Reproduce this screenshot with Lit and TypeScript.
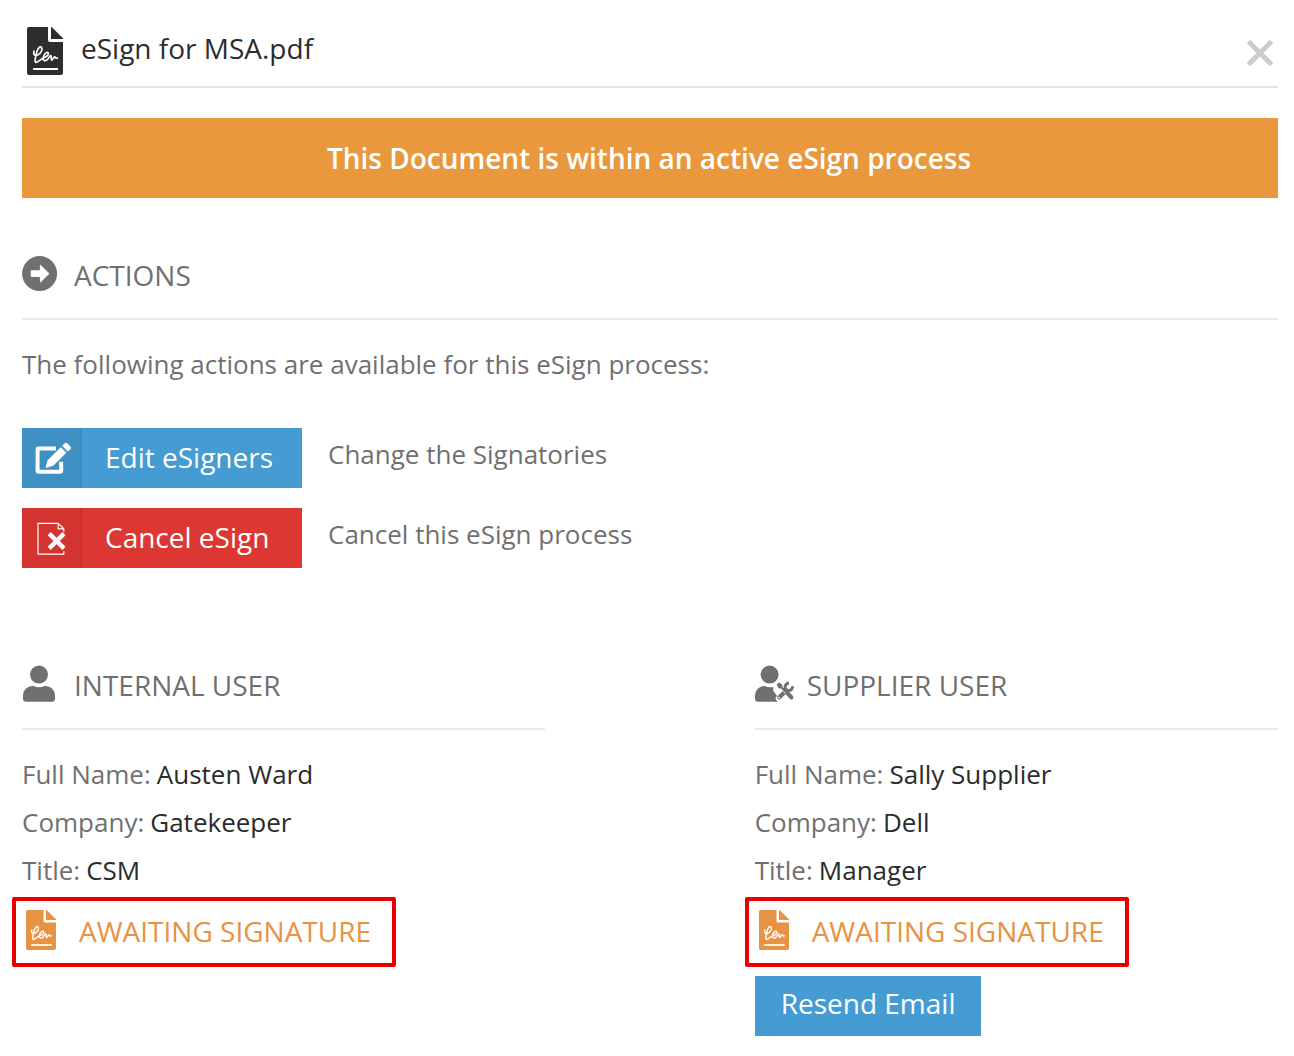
import { LitElement, html, css, svg } from "lit";
import { customElement, property } from "lit/decorators.js";

interface Signatory {
  heading: string;
  icon: "user" | "supplier";
  name: string;
  company: string;
  title: string;
  canResend: boolean;
}

const signatories: Signatory[] = [
  { heading: "INTERNAL USER", icon: "user", name: "Austen Ward", company: "Gatekeeper", title: "CSM", canResend: false },
  { heading: "SUPPLIER USER", icon: "supplier", name: "Sally Supplier", company: "Dell", title: "Manager", canResend: true },
];

const glyphs = {
  signature: {
    box: "0 0 36 48",
    art: svg`
      <path fill="currentColor" d="M2 0H21V13a2 2 0 0 0 2 2H36V46a2 2 0 0 1-2 2H2a2 2 0 0 1-2-2V2A2 2 0 0 1 2 0Z"/>
      <path fill="currentColor" d="M24 0H24.6L36 11.2V12H24Z"/>
      <path fill="none" stroke="#fff" stroke-width="1.7" stroke-linecap="round" stroke-linejoin="round"
        d="M7 24C6 27.6 8 29.4 11 27.8C14.6 25.8 16 21.6 14.2 20C12 18.8 9.8 23.4 9 28C8.2 32 7.4 35.6 9.2 35.4C11.6 35.2 13.6 31.6 16.8 30.8C20.4 29.8 22.2 26.8 21 25.6C19.4 24.6 16.4 28 16 31C15.6 33.8 18 34.4 20 32.8C21.8 31.4 22.6 28.4 23.8 28.6C25 29 23.4 32.8 24.6 33.2C26 33.2 26.4 29.6 27.8 29.8C28.6 30 28 32 30.4 31"/>
      <path fill="#fff" d="M6 41H31V43H6Z"/>`,
  },
  arrow: {
    box: "0 0 36 36",
    art: svg`
      <circle cx="17.6" cy="17.6" r="17.5" fill="currentColor"/>
      <path fill="#fff" stroke="#fff" stroke-width="1" stroke-linejoin="round" d="M9.2 14.8H18.4V9.2L27 17.6L18.4 26V20.4H9.2Z"/>`,
  },
  user: {
    box: "0 0 36 36",
    art: svg`
      <circle cx="17" cy="8.6" r="9" fill="currentColor"/>
      <path fill="currentColor" d="M10.4 20H11.6A13 13 0 0 0 22.4 20H23.6A9.4 9.4 0 0 1 33 29.4V32.6A3.2 3.2 0 0 1 29.8 35.8H4.2A3.2 3.2 0 0 1 1 32.6V29.4A9.4 9.4 0 0 1 10.4 20Z"/>`,
  },
  supplier: {
    box: "0 0 40 36",
    art: svg`
      <circle cx="14.6" cy="8.6" r="9" fill="currentColor"/>
      <path fill="currentColor" d="M9 20H9.8A13 13 0 0 0 18.4 21C17.8 23.4 18.2 25.2 19.8 26.8L22 29.8L20.4 32C20.8 33.6 21.4 34.6 23 35.8H3A3 3 0 0 1 0 32.8V29.4A9.4 9.4 0 0 1 9 20Z"/>
      <path fill="none" stroke="currentColor" stroke-width="4.2" stroke-linecap="round" d="M24.2 31.4L31.2 24.8"/>
      <path fill="none" stroke="currentColor" stroke-width="3" d="M37.4 20.2A3.7 3.7 0 1 1 34 17.2"/>
      <path fill="none" stroke="currentColor" stroke-width="2" d="M23 18L30 25"/>
      <path fill="currentColor" d="M21.6 18.6L24 16.4L27.4 18.8V21L25.6 22.6L23.6 22.2Z"/>
      <path fill="none" stroke="#fff" stroke-width="1" d="M28.4 25.4L34 31.4"/>
      <path fill="none" stroke="currentColor" stroke-width="4.2" stroke-linecap="round" d="M32 26.6L36.4 31.4"/>
      <circle cx="24" cy="31.6" r=".9" fill="#fff"/>`,
  },
  edit: {
    box: "0 0 36 32",
    art: svg`
      <path fill="none" stroke="currentColor" stroke-width="4" stroke-linejoin="round" d="M21 5.4H3.6A1 1 0 0 0 2.6 6.4V27.8A1 1 0 0 0 3.6 28.8H25.2A1 1 0 0 0 26.2 27.8V18.8"/>
      <path fill="currentColor" d="M25.8 4.2L31.4 9.8L18.6 22.4L12 24.8Q10.6 25 10.8 23.6L12.6 17.2Z"/>
      <path fill="currentColor" d="M27.2 2.8L29.6 .4Q31 -.8 32.4 .4L35.4 3.4Q36.6 4.8 35.4 6.2L32.8 8.6Z"/>`,
  },
  cancel: {
    box: "0 0 36 32",
    art: svg`
      <path fill="none" stroke="currentColor" stroke-width="1.2" d="M28.8 28.2V31.2H3V.4H23.2L28.8 5.8V8.8"/>
      <path fill="none" stroke="currentColor" stroke-width="1.2" d="M23.2 .4V5.8H28.8"/>
      <path fill="none" stroke="currentColor" stroke-width="4.4" d="M14.2 10.6L29 25.4M29 10.6L14.2 25.4"/>`,
  },
  close: {
    box: "0 0 28 28",
    art: svg`<path fill="none" stroke="currentColor" stroke-width="5" d="M2.4 2.4L25.6 25.6M25.6 2.4L2.4 25.6"/>`,
  },
};

type GlyphName = keyof typeof glyphs;

@customElement("ui-icon")
class UiIcon extends LitElement {
  @property() name: GlyphName = "user";

  static styles = css`
    :host {
      display: block;
      flex: none;
    }
    .glyph {
      display: block;
      height: 100%;
      overflow: visible;
    }
  `;

  render() {
    const glyph = glyphs[this.name];
    return html`<svg class="glyph" viewBox=${glyph.box} aria-hidden="true">${glyph.art}</svg>`;
  }
}

@customElement("app-root")
class AppRoot extends LitElement {
  static styles = css`
    :host {
      display: block;
      box-sizing: border-box;
      padding: 0 16px 20px 22px;
      background: #fff;
      color: #707070;
      font: 26px/40px "Open Sans", "Noto Sans", sans-serif;
    }
    h1,
    h2,
    p,
    dl,
    dd {
      margin: 0;
      font-weight: 400;
    }
    button {
      border: 0;
      padding: 0;
      font: inherit;
      font-size: 28px;
      color: #fff;
      cursor: pointer;
    }
    .header {
      display: flex;
      align-items: center;
      gap: 18px;
      height: 70px;
      padding: 16px 4px 0 5px;
      border-bottom: 2px solid #e4e4e4;
      color: #2b2d2f;
    }
    .header-icon {
      height: 48px;
    }
    .title {
      flex: 1;
      padding-bottom: 6px;
      font-size: 28px;
    }
    .close {
      display: grid;
      padding-top: 4px;
      background: none;
      color: #ccc;
    }
    .close-icon {
      height: 28px;
    }
    .banner {
      margin-top: 30px;
      padding: 20px 22px 20px 20px;
      background: #e9983e;
      color: #fff;
      font-size: 28px;
      font-weight: 600;
      text-align: center;
    }
    .heading {
      display: grid;
      grid-template-columns: 52px 1fr;
      align-items: center;
      margin-top: 50px;
      padding-bottom: 16px;
      border-bottom: 2px solid #eaeaea;
      font-size: 28px;
      line-height: 54px;
    }
    .heading-icon {
      height: 36px;
      margin-bottom: 2px;
    }
    .intro {
      margin-top: 24px;
    }
    .actions {
      display: grid;
      gap: 20px;
      margin-top: 44px;
    }
    .action {
      display: flex;
      gap: 26px;
      line-height: 52px;
    }
    .action-button {
      display: flex;
      min-width: 280px;
      line-height: 58px;
    }
    .blue {
      background: #459cd2;
    }
    .red {
      background: #dc3732;
    }
    .strip {
      display: grid;
      place-items: center;
      box-sizing: border-box;
      width: 60px;
      height: 60px;
      padding: 2px 0 0 4px;
      border-right: 2px solid rgba(0, 0, 0, 0.03);
      background: rgba(0, 0, 0, 0.07);
    }
    .red .strip {
      background: rgba(0, 0, 0, 0.04);
    }
    .strip-icon {
      height: 32px;
    }
    .action-label {
      padding: 0 23px;
    }
    .signatories {
      display: grid;
      grid-template-columns: 5fr 2fr 5fr;
      margin-top: 40px;
    }
    .signatory:last-child {
      grid-column: 3;
    }
    .details {
      margin-top: 20px;
      line-height: 48px;
    }
    .detail {
      display: flex;
      gap: 6px;
    }
    .value {
      color: #2b2b2b;
    }
    .status {
      position: relative;
      display: inline-grid;
      grid-template-columns: 53px auto;
      align-items: center;
      margin-top: 7px;
      padding-left: 4px;
      color: #e89243;
      font-size: 28px;
      line-height: 60px;
    }
    .status::after {
      content: "";
      position: absolute;
      inset: -4px -25px -6px -10px;
      border: 4px solid #e60000;
      border-radius: 2px;
    }
    .status-icon {
      height: 40px;
      margin-bottom: 2px;
    }
    .resend {
      display: block;
      margin-top: 15px;
      padding: 7px 26px 13px;
    }
  `;

  private renderHeading(icon: GlyphName, text: string) {
    return html`<h2 class="heading"><ui-icon class="heading-icon" name=${icon}></ui-icon>${text}</h2>`;
  }

  private renderAction(tone: string, icon: GlyphName, label: string, description: string) {
    return html`
      <div class="action">
        <button class="action-button ${tone}" type="button">
          <span class="strip"><ui-icon class="strip-icon" name=${icon}></ui-icon></span>
          <span class="action-label">${label}</span>
        </button>
        <span>${description}</span>
      </div>
    `;
  }

  private renderDetail(label: string, value: string) {
    return html`<div class="detail"><dt>${label}:</dt><dd class="value">${value}</dd></div>`;
  }

  private renderSignatory(person: Signatory) {
    return html`
      <section class="signatory">
        ${this.renderHeading(person.icon, person.heading)}
        <dl class="details">
          ${this.renderDetail("Full Name", person.name)}
          ${this.renderDetail("Company", person.company)}
          ${this.renderDetail("Title", person.title)}
        </dl>
        <div class="status"><ui-icon class="status-icon" name="signature"></ui-icon>AWAITING SIGNATURE</div>
        ${person.canResend ? html`<button class="resend blue" type="button">Resend Email</button>` : null}
      </section>
    `;
  }

  render() {
    return html`
      <header class="header">
        <ui-icon class="header-icon" name="signature"></ui-icon>
        <h1 class="title">eSign for MSA.pdf</h1>
        <button class="close" type="button" aria-label="Close">
          <ui-icon class="close-icon" name="close"></ui-icon>
        </button>
      </header>
      <main>
        <p class="banner">This Document is within an active eSign process</p>
        <section>
          ${this.renderHeading("arrow", "ACTIONS")}
          <p class="intro">The following actions are available for this eSign process:</p>
          <div class="actions">
            ${this.renderAction("blue", "edit", "Edit eSigners", "Change the Signatories")}
            ${this.renderAction("red", "cancel", "Cancel eSign", "Cancel this eSign process")}
          </div>
        </section>
        <div class="signatories">${signatories.map((person) => this.renderSignatory(person))}</div>
      </main>
    `;
  }
}
